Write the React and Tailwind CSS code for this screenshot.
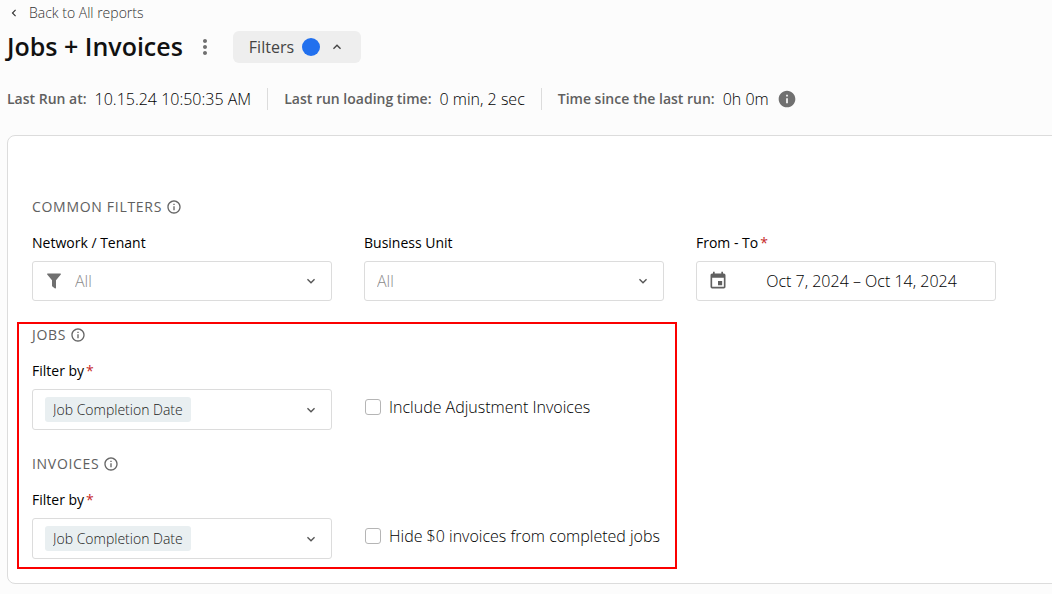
import { useState } from 'react';
import {
  MdChevronLeft,
  MdEvent,
  MdExpandLess,
  MdExpandMore,
  MdInfo,
  MdInfoOutline,
  MdMoreVert,
} from 'react-icons/md';

const runStats = [
  { label: 'Last Run at:', value: '10.15.24 10:50:35 AM' },
  { label: 'Last run loading time:', value: '0 min, 2 sec' },
  { label: 'Time since the last run:', value: '0h 0m', info: true },
];

function FunnelIcon() {
  return (
    <svg viewBox="0 0 14 16" className="h-4 w-3.5 shrink-0 fill-[#707070]" aria-hidden="true">
      <path d="M0.6 0.5h12.8c.5 0 .7.6.4 1L9 7.2v7.6c0 .6-.6.9-1 .6l-2.600-1.900a1 1 0 0 1-.4-.8V7.200L.2 1.500C-.1 1.100.1.5.6.5z" />
    </svg>
  );
}

function SectionTitle({ children }) {
  return (
    <h2 className="flex h-5 items-center gap-1 text-sm tracking-wider text-[#606060]">
      {children}
      <MdInfoOutline className="h-4 w-4 text-[#666]" />
    </h2>
  );
}

function Field({ id, label, required, children }) {
  return (
    <div className="w-75">
      <label htmlFor={id} className="flex h-5 items-center gap-0.5 text-sm text-black">
        {label}
        {required && <span className="text-[#c62828]">*</span>}
      </label>
      {children}
    </div>
  );
}

function AnySelect({ id, icon }) {
  return (
    <div className="mt-2 flex h-10 items-center rounded-[3px] border border-[#dcdcdc] bg-white px-3">
      {icon && <span className="mr-3 flex w-[18px] justify-center">{icon}</span>}
      <select id={id} className="min-w-0 flex-1 appearance-none bg-transparent text-base font-light text-[#8c8c8c] outline-none">
        <option>All</option>
      </select>
      <MdExpandMore className="h-4 w-4 text-[#555]" />
    </div>
  );
}

function ChipSelect({ id }) {
  return (
    <div className="mt-2 flex h-[41px] items-center justify-between rounded-[3px] border border-[#dcdcdc] bg-white px-3">
      <select id={id} className="h-[25px] w-[146px] appearance-none rounded-[3px] bg-[#e9eff1] px-2 text-sm leading-5 font-light text-[#222] outline-none">
        <option>Job Completion Date</option>
      </select>
      <MdExpandMore className="h-4 w-4 text-[#555]" />
    </div>
  );
}

function FilterGroup({ title, id, checkboxLabel }) {
  return (
    <section>
      <SectionTitle>{title}</SectionTitle>
      <div className="mt-4 flex gap-8">
        <Field id={`${id}-filter-by`} label="Filter by" required>
          <ChipSelect id={`${id}-filter-by`} />
        </Field>
        <label className="mt-7 flex h-9 w-75 items-center gap-2 pl-px text-base font-light whitespace-nowrap text-black">
          <input type="checkbox" className="h-4 w-4 shrink-0 appearance-none rounded-[3px] border border-[#b5b5b5] bg-white checked:bg-[#2270ee]" />
          {checkboxLabel}
        </label>
      </div>
    </section>
  );
}

export default function App() {
  const [showFilters, setShowFilters] = useState(true);

  return (
    <div className="min-h-screen overflow-x-hidden bg-[#fcfcfc] pb-2.5 pl-[7px] font-['Open_Sans',sans-serif]">
      {/* Header */}
      <header>
        <a href="#reports" className="flex h-[25px] w-fit items-center gap-2 text-sm font-light text-[#333]">
          <MdChevronLeft className="h-3.5 w-3.5" />
          Back to All reports
        </a>

        <div className="mt-1.5 flex h-8 items-center">
          <h1 className="text-[25px] font-semibold text-[#111]">Jobs + Invoices</h1>
          <button type="button" aria-label="More actions" className="ml-2.5 text-[#707070]">
            <MdMoreVert className="h-6 w-6" />
          </button>
          <button
            type="button"
            onClick={() => setShowFilters(!showFilters)}
            className="ml-4 flex h-8 w-32 items-center justify-between rounded-md bg-[#eeeeee] px-4 text-base text-[#444]"
          >
            Filters
            <span className="h-[18px] w-[18px] rounded-full bg-[#2270ee]" />
            <MdExpandLess className="h-4 w-4" />
          </button>
        </div>

        <dl className="mt-[25px] flex h-[22px] items-center whitespace-nowrap">
          {runStats.map((stat) => (
            <div key={stat.label} className="flex h-full items-center gap-2 border-l border-[#dcdcdc] px-4 first:border-l-0 first:pl-0">
              <dt className="text-sm font-semibold text-[#606060]">{stat.label}</dt>
              <dd className="flex items-center gap-2 text-base font-light text-black">
                {stat.value}
                {stat.info && <MdInfo className="h-5 w-5 text-[#707070]" />}
              </dd>
            </div>
          ))}
        </dl>
      </header>

      {/* Filters panel */}
      {showFilters && (
        <main className="mt-[25px] -mr-2 rounded-lg border border-[#dcdcdc] bg-white pt-[61px] pb-3.5 pl-[9px]">
          <section className="px-[15px]">
            <SectionTitle>COMMON FILTERS</SectionTitle>
            <div className="mt-4 flex gap-8">
              <Field id="network" label="Network / Tenant">
                <AnySelect id="network" icon={<FunnelIcon />} />
              </Field>
              <Field id="business-unit" label="Business Unit">
                <AnySelect id="business-unit" />
              </Field>
              <Field id="date-range" label="From - To" required>
                <div className="mt-2 flex h-10 items-center rounded-[3px] border border-[#dcdcdc] bg-white pl-[11px]">
                  <MdEvent className="h-5 w-5 shrink-0 text-[#606060]" />
                  <input
                    id="date-range"
                    type="text"
                    defaultValue="Oct 7, 2024 – Oct 14, 2024"
                    className="min-w-0 flex-1 bg-transparent text-center text-base font-light text-black outline-none"
                  />
                </div>
              </Field>
            </div>
          </section>

          <div className="mt-[21px] flex w-fit flex-col gap-6 border-2 border-[#fb0000] pt-px pr-[11px] pb-2 pl-[13px]">
            <FilterGroup title="JOBS" id="jobs" checkboxLabel="Include Adjustment Invoices" />
            <FilterGroup title="INVOICES" id="invoices" checkboxLabel="Hide $0 invoices from completed jobs" />
          </div>
        </main>
      )}
    </div>
  );
}
